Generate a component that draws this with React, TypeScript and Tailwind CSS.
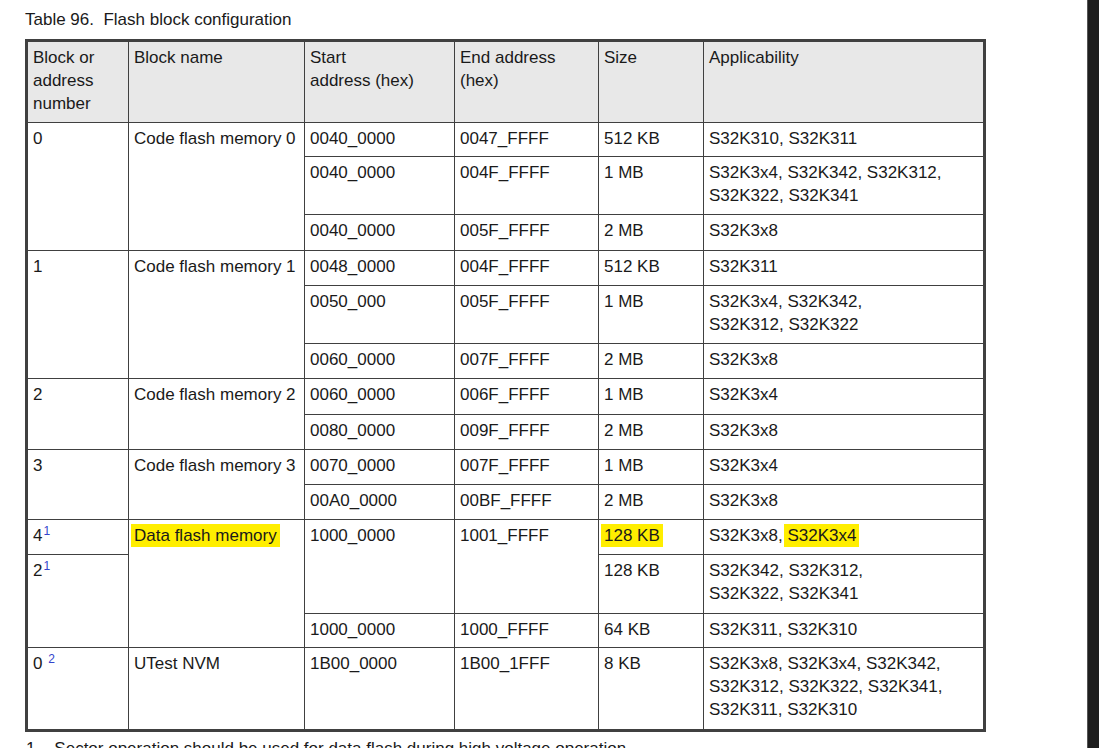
import React from "react";

const td = "border border-[#404040] align-top pl-[5px] pr-1 pt-[4px] leading-[23px]";
const Hl = ({ children }: { children: React.ReactNode }) => (
  <span className="bg-[#ffee00] px-[3px] -mx-[3px] py-[2px]">{children}</span>
);
const Sup = ({ n }: { n: string }) => <sup className="text-[#3344cc] text-[12px] ml-[1px]">{n}</sup>;

export default function App() {
  return (
    <div className="w-[1099px] h-[748px] overflow-hidden bg-white flex text-[#1a1a1a]" style={{ fontFamily: '"Liberation Sans", Arial, sans-serif' }}>
      <div className="flex-1 pl-[25px] pt-[9px]">
        <div className="text-[17px] leading-[22px] h-[30px]">Table 96.&nbsp; Flash block configuration</div>
        <table className="border-collapse border-[3px] border-[#404040] text-[17px] w-[961px]">
          <colgroup>
            <col className="w-[102px]" /><col className="w-[176px]" /><col className="w-[150px]" /><col className="w-[144px]" /><col className="w-[105px]" /><col />
          </colgroup>
          <tbody>
            <tr className="h-[82px] bg-[#e8e8e8]">
              <td className={td}>Block or address number</td>
              <td className={td}>Block name</td>
              <td className={td}>Start<br />address (hex)</td>
              <td className={td}>End address<br />(hex)</td>
              <td className={td}>Size</td>
              <td className={td}>Applicability</td>
            </tr>
            <tr className="h-[34px]">
              <td className={td} rowSpan={3}>0</td>
              <td className={td} rowSpan={3}>Code flash memory 0</td>
              <td className={td}>0040_0000</td><td className={td}>0047_FFFF</td><td className={td}>512 KB</td><td className={td}>S32K310, S32K311</td>
            </tr>
            <tr className="h-[58px]">
              <td className={td}>0040_0000</td><td className={td}>004F_FFFF</td><td className={td}>1 MB</td><td className={td}>S32K3x4, S32K342, S32K312,<br />S32K322, S32K341</td>
            </tr>
            <tr className="h-[36px]">
              <td className={td}>0040_0000</td><td className={td}>005F_FFFF</td><td className={td}>2 MB</td><td className={td}>S32K3x8</td>
            </tr>
            <tr className="h-[35px]">
              <td className={td} rowSpan={3}>1</td>
              <td className={td} rowSpan={3}>Code flash memory 1</td>
              <td className={td}>0048_0000</td><td className={td}>004F_FFFF</td><td className={td}>512 KB</td><td className={td}>S32K311</td>
            </tr>
            <tr className="h-[58px]">
              <td className={td}>0050_000</td><td className={td}>005F_FFFF</td><td className={td}>1 MB</td><td className={td}>S32K3x4, S32K342,<br />S32K312, S32K322</td>
            </tr>
            <tr className="h-[35px]">
              <td className={td}>0060_0000</td><td className={td}>007F_FFFF</td><td className={td}>2 MB</td><td className={td}>S32K3x8</td>
            </tr>
            <tr className="h-[36px]">
              <td className={td} rowSpan={2}>2</td>
              <td className={td} rowSpan={2}>Code flash memory 2</td>
              <td className={td}>0060_0000</td><td className={td}>006F_FFFF</td><td className={td}>1 MB</td><td className={td}>S32K3x4</td>
            </tr>
            <tr className="h-[35px]">
              <td className={td}>0080_0000</td><td className={td}>009F_FFFF</td><td className={td}>2 MB</td><td className={td}>S32K3x8</td>
            </tr>
            <tr className="h-[35px]">
              <td className={td} rowSpan={2}>3</td>
              <td className={td} rowSpan={2}>Code flash memory 3</td>
              <td className={td}>0070_0000</td><td className={td}>007F_FFFF</td><td className={td}>1 MB</td><td className={td}>S32K3x4</td>
            </tr>
            <tr className="h-[35px]">
              <td className={td}>00A0_0000</td><td className={td}>00BF_FFFF</td><td className={td}>2 MB</td><td className={td}>S32K3x8</td>
            </tr>
            <tr className="h-[35px]">
              <td className={td}>4<Sup n="1" /></td>
              <td className={td} rowSpan={3}><Hl>Data flash memory</Hl></td>
              <td className={td} rowSpan={2}>1000_0000</td>
              <td className={td} rowSpan={2}>1001_FFFF</td>
              <td className={td}><Hl>128 KB</Hl></td>
              <td className={td}>S32K3x8, <Hl>S32K3x4</Hl></td>
            </tr>
            <tr className="h-[59px]">
              <td className={td} rowSpan={2}>2<Sup n="1" /></td>
              <td className={td}>128 KB</td><td className={td}>S32K342, S32K312,<br />S32K322, S32K341</td>
            </tr>
            <tr className="h-[34px]">
              <td className={td}>1000_0000</td><td className={td}>1000_FFFF</td><td className={td}>64 KB</td><td className={td}>S32K311, S32K310</td>
            </tr>
            <tr className="h-[83px]">
              <td className={td}>0 <Sup n="2" /></td>
              <td className={td}>UTest NVM</td>
              <td className={td}>1B00_0000</td><td className={td}>1B00_1FFF</td><td className={td}>8 KB</td>
              <td className={td}>S32K3x8, S32K3x4, S32K342,<br />S32K312, S32K322, S32K341,<br />S32K311, S32K310</td>
            </tr>
          </tbody>
        </table>
        <div className="text-[17px] leading-[20px] mt-[7px] pl-[1px]">1.&nbsp;&nbsp; Sector operation should be used for data flash during high voltage operation.</div>
      </div>
      <div className="w-[12px] bg-[#1e1e1e] border-l border-[#555]" />
    </div>
  );
}
